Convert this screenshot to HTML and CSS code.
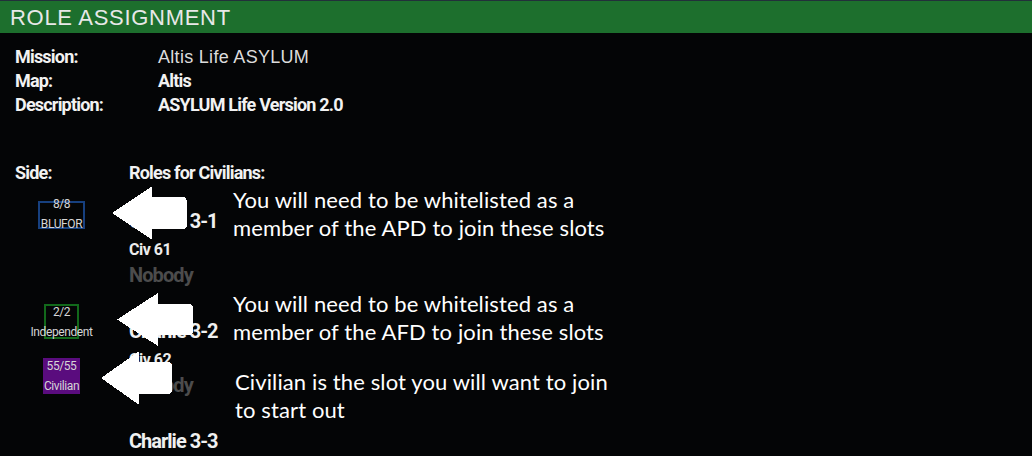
FILE: index.html
```html
<!DOCTYPE html>
<html lang="en">
<head>
<meta charset="utf-8">
<title>Role Assignment</title>
<link rel="stylesheet" href="styles.css">
</head>
<body>
<div class="screen">
  <header class="titlebar">
    <h1 class="title">ROLE ASSIGNMENT</h1>
  </header>

  <dl class="info">
    <dt>Mission:</dt><dd class="value-light">Altis Life ASYLUM</dd>
    <dt>Map:</dt><dd>Altis</dd>
    <dt>Description:</dt><dd>ASYLUM Life Version 2.0</dd>
  </dl>

  <section class="slots">
    <div class="sides">
      <div class="section-label">Side:</div>
      <div class="side side-blufor"><span class="side-count">8/8</span><span class="side-name">BLUFOR</span></div>
      <div class="side side-indep"><span class="side-count">2/2</span><span class="side-name">Independent</span></div>
      <div class="side side-civ"><span class="side-count">55/55</span><span class="side-name">Civilian</span></div>
    </div>
    <div class="roles">
      <div class="section-label">Roles for Civilians:</div>
      <div class="group">
        <div class="group-name">Charlie 3-1</div>
        <div class="role">Civ 61</div>
        <div class="player">Nobody</div>
      </div>
      <div class="group">
        <div class="group-name">Charlie 3-2</div>
        <div class="role">Civ 62</div>
        <div class="player">Nobody</div>
      </div>
      <div class="group">
        <div class="group-name">Charlie 3-3</div>
      </div>
    </div>
  </section>

  <div class="annotations">
    <svg class="arrow arrow-1" viewBox="0 0 76 54" preserveAspectRatio="none"><path d="M0 27 L41 0 L41 11 L71 11 Q76 11 76 16 L76 38 Q76 43 71 43 L41 43 L41 54 Z"/></svg>
    <svg class="arrow arrow-2" viewBox="0 0 76 54" preserveAspectRatio="none"><path d="M0 27 L41 0 L41 11 L71 11 Q76 11 76 16 L76 38 Q76 43 71 43 L41 43 L41 54 Z"/></svg>
    <svg class="arrow arrow-3" viewBox="0 0 76 54" preserveAspectRatio="none"><path d="M0 27 L41 0 L41 11 L71 11 Q76 11 76 16 L76 38 Q76 43 71 43 L41 43 L41 54 Z"/></svg>
    <p class="note note-1">You will need to be whitelisted as a<br>member of the APD to join these slots</p>
    <p class="note note-2">You will need to be whitelisted as a<br>member of the AFD to join these slots</p>
    <p class="note note-3">Civilian is the slot you will want to join<br>to start out</p>
  </div>
</div>
</body>
</html>
```

FILE: styles.css
```css
html, body {
  margin: 0;
  padding: 0;
  background: #040506;
  overflow: hidden;
}

.screen {
  position: relative;
  width: 1032px;
  height: 456px;
  background: #040506;
  font-family: Roboto, "Liberation Sans", Arial, sans-serif;
  color: #f2f2f2;
}

.titlebar {
  box-sizing: border-box;
  height: 33px;
  border-top: 1px solid #22303a;
  background: #1d6f2d;
  padding: 2px 0 0 10px;
}

.title {
  margin: 0;
  font-family: "Liberation Sans", Arial, sans-serif;
  font-weight: normal;
  font-size: 22px;
  line-height: 30px;
  letter-spacing: 0.7px;
  color: #e8e8e8;
}

.info {
  display: grid;
  grid-template-columns: 143px auto;
  margin: 12px 0 0;
  padding-left: 15px;
  font-size: 18px;
  line-height: 24px;
  font-weight: bold;
  letter-spacing: -0.8px;
}

.info dt, .info dd {
  margin: 0;
  white-space: nowrap;
}

.info .value-light {
  font-family: "Liberation Sans", Arial, sans-serif;
  font-weight: normal;
  letter-spacing: 0.3px;
  color: #dcdcdc;
}

.slots {
  display: flex;
  gap: 21px;
  margin-top: 44px;
  padding-left: 15px;
}

.section-label {
  font-size: 18px;
  line-height: 24px;
  font-weight: bold;
  letter-spacing: -0.8px;
  white-space: nowrap;
  align-self: flex-start;
}

.sides {
  width: 93px;
  display: flex;
  flex-direction: column;
  align-items: center;
}

.side {
  box-sizing: border-box;
  display: flex;
  flex-direction: column;
  align-items: center;
  font-size: 12px;
  line-height: 20px;
  letter-spacing: -0.4px;
  color: #d6d6d6;
  white-space: nowrap;
}

.side span {
  flex-shrink: 0;
}

.side-blufor {
  width: 47px;
  height: 28px;
  border: 2px solid #17407f;
  margin-top: 16px;
}
.side-blufor .side-count { margin-top: -9px; }

.side-indep {
  width: 35px;
  height: 35px;
  border: 2px solid #12691b;
  margin-top: 75px;
}
.side-indep .side-count { margin-top: -4px; }

.side-civ {
  width: 37px;
  height: 36px;
  background: #5a0c7e;
  margin-top: 19px;
}
.side-civ .side-count { margin-top: -2px; }

.roles {
  display: flex;
  flex-direction: column;
}

.group {
  margin-top: 30px;
  font-weight: bold;
  white-space: nowrap;
}
.section-label + .group { margin-top: 21px; }

.group-name {
  font-size: 20px;
  line-height: 30px;
  letter-spacing: -1px;
  color: #f0f0f0;
}

.role {
  font-size: 16px;
  line-height: 28px;
  letter-spacing: -0.5px;
  color: #ececec;
}

.player {
  font-size: 20px;
  line-height: 22px;
  letter-spacing: -0.9px;
  color: #4c4c4c;
}

.annotations {
  position: absolute;
  inset: 0;
  pointer-events: none;
}

.arrow {
  position: absolute;
  fill: #ffffff;
  shape-rendering: crispEdges;
}
.arrow-1 { left: 112px; top: 186px; width: 75px; height: 54px; }
.arrow-2 { left: 117px; top: 293px; width: 76px; height: 53px; }
.arrow-3 { left: 101px; top: 351px; width: 71px; height: 54px; }

.note {
  position: absolute;
  margin: 0;
  font-family: Lato, "Open Sans", sans-serif;
  font-size: 22px;
  line-height: 27.5px;
  letter-spacing: 0.12px;
  color: #ffffff;
  white-space: nowrap;
}
.note-1 { left: 233px; top: 186px; }
.note-2 { left: 233px; top: 290px; }
.note-3 { left: 235px; top: 368px; }
```
